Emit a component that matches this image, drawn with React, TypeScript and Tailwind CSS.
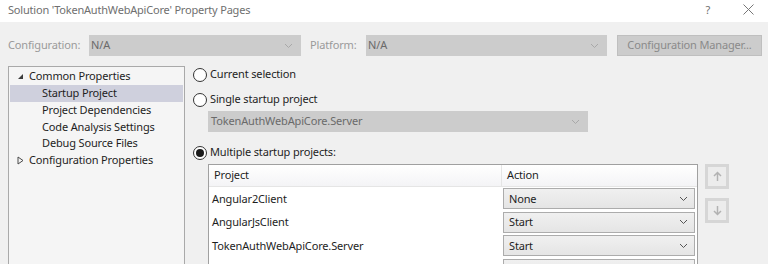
import React from "react";

const Chevron = ({ className = "" }: { className?: string }) => (
  <svg width="9" height="6" viewBox="0 0 9 6" className={className}>
    <path d="M1 1l3.5 3.5L8 1" fill="none" stroke="currentColor" strokeWidth="1" />
  </svg>
);

const Radio = ({ checked }: { checked?: boolean }) => (
  <span className="w-[14px] h-[14px] rounded-full border border-[#333] bg-white flex items-center justify-center shrink-0">
    {checked && <span className="w-[8px] h-[8px] rounded-full bg-[#1a1a1a]"></span>}
  </span>
);

const rows = [
  { name: "Angular2Client", action: "None" },
  { name: "AngularJsClient", action: "Start" },
  { name: "TokenAuthWebApiCore.Server", action: "Start" },
  { name: "", action: "" },
];

export default function App() {
  return (
    <div
      className="w-[768px] h-[264px] overflow-hidden bg-[#f0f0f0] text-[11px] tracking-[-0.15px] text-[#1e1e1e]"
      style={{ fontFamily: '"Noto Sans", "Open Sans", sans-serif' }}
    >
      {/* title bar */}
      <div className="h-[22px] bg-white flex items-start pt-[1px] pl-[8px] pr-[14px] text-[#6f6f6f] text-[11px] tracking-[-0.2px]">
        <span className="flex-1 leading-[17px]">Solution 'TokenAuthWebApiCore' Property Pages</span>
        <span className="leading-[17px] mr-[33px]">?</span>
        <svg width="11" height="11" viewBox="0 0 11 11" className="mt-[3px] text-[#777]">
          <path d="M0.5 0.5l10 10M10.5 0.5l-10 10" stroke="currentColor" strokeWidth="1" />
        </svg>
      </div>

      {/* configuration row */}
      <div className="flex items-center mt-[13px] h-[21px] pl-[8px]">
        <span className="w-[81px] text-[#9a9a9a]">Configuration:</span>
        <div className="w-[212px] h-[21px] bg-[#cccccc] flex items-center justify-between pl-[2px] pr-[8px] text-[#6a6a6a]">
          <span>N/A</span>
          <Chevron className="text-[#a8a8a8]" />
        </div>
        <span className="ml-[9px] w-[56px] text-[#9a9a9a]">Platform:</span>
        <div className="w-[241px] h-[21px] bg-[#cccccc] flex items-center justify-between pl-[2px] pr-[8px] text-[#6a6a6a]">
          <span>N/A</span>
          <Chevron className="text-[#a8a8a8]" />
        </div>
        <div className="ml-[10px] w-[145px] h-[21px] bg-[#cccccc] border border-[#bfbfbf] flex items-center justify-center text-[#8a8a8a]">
          Configuration Manager...
        </div>
      </div>

      {/* main */}
      <div className="flex mt-[10px] pl-[8px]">
        <div className="w-[177px] h-[220px] border border-[#a9a9a9] bg-[#f5f5f5] pt-[1px] px-[1px]">
          <div className="flex items-center h-[17px] pl-[7px]">
            <svg width="7" height="7" viewBox="0 0 7 7" className="mr-[5px]">
              <path d="M6 1v5H1z" fill="#3c3c3c" />
            </svg>
            Common Properties
          </div>
          <div className="h-[17px] bg-[#cfd0dd] pl-[32px] flex items-center">Startup Project</div>
          <div className="h-[17px] pl-[32px] flex items-center">Project Dependencies</div>
          <div className="h-[16px] pl-[32px] flex items-center">Code Analysis Settings</div>
          <div className="h-[17px] pl-[32px] flex items-center">Debug Source Files</div>
          <div className="flex items-center h-[17px] pl-[7px]">
            <svg width="7" height="9" viewBox="0 0 7 9" className="mr-[5px]">
              <path d="M1 1l5 3.5L1 8z" fill="none" stroke="#4a4a4a" strokeWidth="1" />
            </svg>
            Configuration Properties
          </div>
        </div>

        <div className="ml-[8px] flex flex-col">
          <div className="flex items-center gap-[3px] h-[17px]">
            <Radio />
            <span>Current selection</span>
          </div>
          <div className="flex items-center gap-[3px] h-[17px] mt-[8px]">
            <Radio />
            <span>Single startup project</span>
          </div>
          <div className="ml-[15px] mt-[3px] w-[380px] h-[21px] bg-[#cccccc] flex items-center justify-between pl-[3px] pr-[8px] text-[#6a6a6a]">
            <span>TokenAuthWebApiCore.Server</span>
            <Chevron className="text-[#a8a8a8]" />
          </div>
          <div className="flex items-center gap-[3px] h-[17px] mt-[12px]">
            <Radio checked />
            <span>Multiple startup projects:</span>
          </div>

          <div className="flex mt-[3px]">
            <div className="ml-[15px] w-[490px] h-[120px] border border-[#a0a0a0] bg-white">
              <div className="flex h-[22px] bg-gradient-to-b from-white to-[#f4f4f6] border-b border-[#e5e5e5]">
                <div className="w-[293px] border-r border-[#e5e5e5] pl-[5px] flex items-center">Project</div>
                <div className="flex-1 pl-[5px] flex items-center">Action</div>
              </div>
              {rows.map((r, i) => (
                <div key={i} className="flex h-[23.5px] items-center">
                  <div className="w-[293px] pl-[3px]">{r.name}</div>
                  <div className="flex-1 pl-[1px] pr-[2px]">
                    <div className="h-[21px] border border-[#acacac] bg-gradient-to-b from-[#f0f0f0] to-[#e5e5e5] flex items-center justify-between pl-[5px] pr-[6px]">
                      <span>{r.action}</span>
                      <Chevron className="text-[#555]" />
                    </div>
                  </div>
                </div>
              ))}
            </div>
            <div className="ml-[7px] flex flex-col gap-[9px]">
              <div className="w-[24px] h-[25px] border-[3px] border-[#d6d6d6] bg-[#ececec] flex items-center justify-center">
                <svg width="9" height="11" viewBox="0 0 9 11">
                  <path d="M4.5 10V1.5M1 5l3.5-3.5L8 5" fill="none" stroke="#b2b2b2" strokeWidth="1.5" />
                </svg>
              </div>
              <div className="w-[24px] h-[25px] border-[3px] border-[#d6d6d6] bg-[#ececec] flex items-center justify-center">
                <svg width="9" height="11" viewBox="0 0 9 11">
                  <path d="M4.5 1v8.5M1 6l3.5 3.5L8 6" fill="none" stroke="#b2b2b2" strokeWidth="1.5" />
                </svg>
              </div>
            </div>
          </div>
        </div>
      </div>
    </div>
  );
}
